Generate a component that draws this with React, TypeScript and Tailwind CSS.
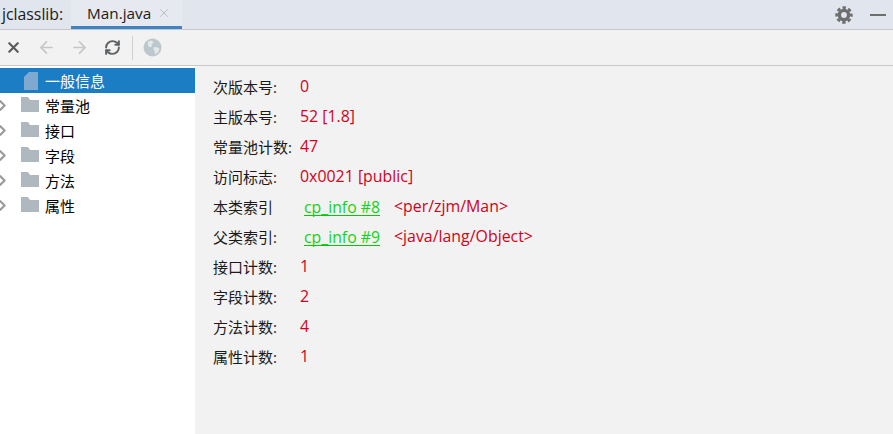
import { ArrowLeft, ArrowRight, ChevronRight, RefreshCw, X } from "lucide-react";

const FONT = "font-['Open_Sans','Noto_Sans_CJK_SC',sans-serif]";

const treeItems = ["常量池", "接口", "字段", "方法", "属性"];

type Row = { label: string; value?: string; link?: string; comment?: string };

const rows: Row[] = [
  { label: "次版本号:", value: "0" },
  { label: "主版本号:", value: "52 [1.8]" },
  { label: "常量池计数:", value: "47" },
  { label: "访问标志:", value: "0x0021 [public]" },
  { label: "本类索引", link: "cp_info #8", comment: "<per/zjm/Man>" },
  { label: "父类索引:", link: "cp_info #9", comment: "<java/lang/Object>" },
  { label: "接口计数:", value: "1" },
  { label: "字段计数:", value: "2" },
  { label: "方法计数:", value: "4" },
  { label: "属性计数:", value: "1" },
];

function FolderIcon() {
  return (
    <svg width="18" height="15" viewBox="0 0 18 15" className="block shrink-0">
      <path d="M0 0h7l2 3h9v12H0z" fill="#afb8bf" />
    </svg>
  );
}

function FileIcon() {
  return (
    <svg width="14" height="18" viewBox="0 0 14 18" className="shrink-0">
      <path d="M5 0h9v18H0V5z" fill="#7fa9cf" />
    </svg>
  );
}

function GearIcon() {
  return (
    <svg width="18" height="18" viewBox="0 0 18 18" className="shrink-0">
      <circle cx="9" cy="9" r="4.6" fill="none" stroke="#6e6e6e" strokeWidth="3.4" />
      <circle cx="9" cy="9" r="7.4" fill="none" stroke="#6e6e6e" strokeWidth="2.6" strokeDasharray="3.4 2.41" strokeDashoffset="1.7" />
    </svg>
  );
}

function GlobeIcon() {
  return (
    <svg width="19" height="19" viewBox="0 0 19 19" className="ml-[10px] shrink-0">
      <circle cx="9.5" cy="9.5" r="9" fill="#bcc8cd" />
      <path d="M5 3.5l4-1 1.5 2-2 2 .5 2-3 .5-1-2zM11 9l4 .5 1.5 1.5-2 4-2.5 1-.5-3-1-2z" fill="#e4e9eb" />
    </svg>
  );
}

function TitleBar() {
  return (
    <header className="flex h-[30px] shrink-0 items-stretch border-b border-[#c4c7cc] bg-[#e1e5ee]">
      <span className="flex h-[29px] w-[71px] items-center pl-[2px] text-[15.8px] text-[#1a1a1a]">jclasslib:</span>
      <div className="flex h-[29px] w-[111px] items-center border-b-[3px] border-[#3f83c4] bg-[#e6e9f0] pl-[16px]">
        <span className="text-[15.3px] text-[#1a1a1a]">Man.java</span>
        <X className="ml-[6px] h-[14px] w-[14px] text-[#b4b8bf]" strokeWidth={1.5} />
      </div>
      <div className="ml-auto flex items-center gap-[15px] pr-[7px]">
        <div className="mr-[2px]">
          <GearIcon />
        </div>
        <div className="h-[2px] w-[16px] bg-[#6e6e6e]" />
      </div>
    </header>
  );
}

function Toolbar() {
  return (
    <div className="flex h-[36px] shrink-0 items-center border-b border-[#c9c9c9] bg-[#f2f2f2] pl-[5px]">
      <X className="h-[17px] w-[17px] text-[#5a5a5a]" strokeWidth={3} />
      <ArrowLeft className="ml-[15px] h-[19px] w-[19px] text-[#c4c7c9]" strokeWidth={2.2} />
      <ArrowRight className="ml-[14px] h-[19px] w-[19px] text-[#c4c7c9]" strokeWidth={2.2} />
      <RefreshCw className="ml-[15px] h-[17px] w-[17px] text-[#5f6365]" strokeWidth={2.8} />
      <div className="ml-[11px] h-[24px] w-px bg-[#cfcfcf]" />
      <GlobeIcon />
    </div>
  );
}

function Tree() {
  return (
    <aside className="w-[195px] shrink-0 bg-white pt-[2px]">
      <div className="flex h-[25px] items-center bg-[#1b7ec5] pl-[24px] text-[15px] text-white">
        <FileIcon />
        <span className="ml-[7px] pt-[2px]">一般信息</span>
      </div>
      {treeItems.map((item) => (
        <div key={item} className="flex h-[25px] items-center text-[15px] text-black">
          <ChevronRight className="ml-[-6px] h-[17px] w-[17px] shrink-0 text-[#9a9a9a]" strokeWidth={3} />
          <span className="ml-[10px] pb-[3px]">
            <FolderIcon />
          </span>
          <span className="ml-[6px] pt-[2px]">{item}</span>
        </div>
      ))}
    </aside>
  );
}

function Details() {
  return (
    <main className="flex-1 bg-[#f2f2f2] pl-[18px] pt-[6px] text-[15px]">
      {rows.map((row) => (
        <div key={row.label} className="flex h-[30px] items-center">
          <span className="w-[87px] shrink-0 text-[#1a1a1a]">{row.label}</span>
          {row.link ? (
            <>
              <span className="mb-[2px] ml-[4px] border-b border-[#10c010] pt-[2px] text-[15.8px] leading-[16px] text-[#14d414]">{row.link}</span>
              <span className="ml-[14px] text-[15.9px] text-[#d0021b]">{row.comment}</span>
            </>
          ) : (
            <span className="text-[15.9px] text-[#d0021b]">{row.value}</span>
          )}
        </div>
      ))}
    </main>
  );
}

export default function App() {
  return (
    <div className={`flex h-[434px] w-[893px] flex-col overflow-hidden bg-[#f2f2f2] ${FONT}`}>
      <TitleBar />
      <Toolbar />
      <div className="flex min-h-0 flex-1">
        <Tree />
        <Details />
      </div>
    </div>
  );
}
